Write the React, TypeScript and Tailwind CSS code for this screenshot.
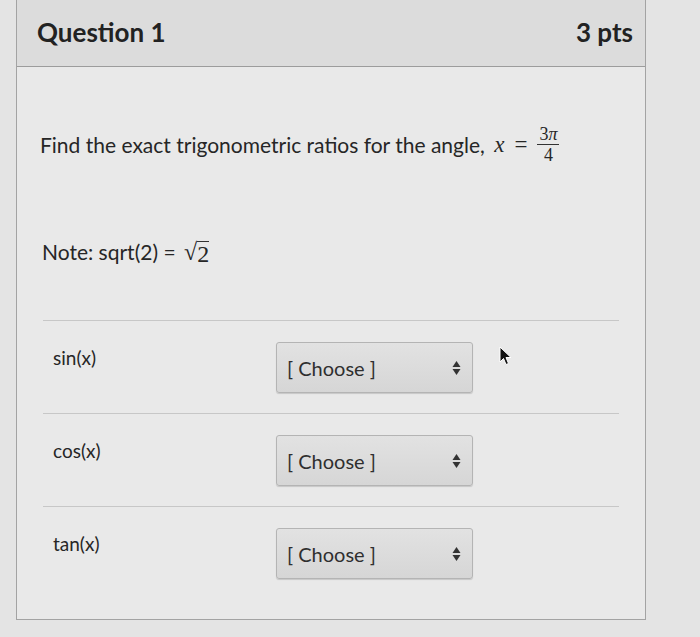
import React from 'react';

const rows = ['sin(x)', 'cos(x)', 'tan(x)'];

const SelectBox: React.FC = () => (
  <div className="flex h-[51px] w-[197px] items-center justify-between rounded-[3px] border border-[#b4b4b4] bg-gradient-to-b from-[#e2e2e2] to-[#d6d6d6] pl-[10px] pr-[11px] shadow-[0_1px_1px_rgba(0,0,0,0.15)]">
    <span className="text-[20px] text-[#2f2f2f]">[ Choose ]</span>
    <svg width="9" height="16" viewBox="0 0 9 16" className="mt-[1px]">
      <path d="M4.5 1 L8.5 7 L0.5 7 Z" fill="#333" />
      <path d="M0.5 9 L8.5 9 L4.5 15 Z" fill="#333" />
    </svg>
  </div>
);

const Cursor: React.FC = () => (
  <svg width="14" height="20" viewBox="0 0 14 20" className="absolute left-[499px] top-[346px]">
    <path d="M1 1 L1 16 L4.5 12.5 L7 18.5 L9.5 17.5 L7 11.5 L12 11.5 Z" fill="#111" stroke="#fff" strokeWidth="1" />
  </svg>
);

const App: React.FC = () => {
  return (
    <div className="relative h-[637px] w-[700px] overflow-hidden bg-[#e4e4e4] font-['Lato','Liberation_Sans',sans-serif] text-[#262626]">
      <div className="ml-[16px] mt-[-2px] flex h-[622px] w-[630px] flex-col border border-[#a3a3a3] bg-[#e9e9e9]">
        <header className="flex h-[68px] shrink-0 items-center justify-between border-b border-[#9c9c9c] bg-[#dcdcdc] pl-[20px] pr-[12px]">
          <h1 className="text-[26px] font-bold text-[#222]">Question 1</h1>
          <span className="text-[26px] font-bold text-[#222]">3 pts</span>
        </header>

        <div className="flex flex-1 flex-col pt-[58px]">
          <p className="flex items-center pl-[23px] text-[21px] leading-[28px]">
            <span>Find the exact trigonometric ratios for the angle,&nbsp;</span>
            <span className="ml-[4px] font-['Liberation_Serif',serif] text-[23px] italic">x</span>
            <span className="mx-[10px] font-['Liberation_Serif',serif] text-[23px]">=</span>
            <span className="inline-flex flex-col items-center font-['Liberation_Serif',serif] text-[18px] leading-[18px]">
              <span className="border-b border-[#333] px-[2px] pb-[1px]">3<i>π</i></span>
              <span className="pt-[1px]">4</span>
            </span>
          </p>

          <p className="mt-[74px] flex items-end pl-[25px] text-[21px] leading-[28px]">
            <span>Note: sqrt(2) =&nbsp;</span>
            <span className="ml-[3px] inline-flex items-end font-['Liberation_Serif',serif] text-[24px]">
              <span className="leading-[27px]">√</span>
              <span className="border-t border-[#333] leading-[24px]">2</span>
            </span>
          </p>

          <div className="mt-[54px] px-[26px]">
            {rows.map((label, i) => (
              <div
                key={label}
                className={`flex items-start border-t border-[#c7c7c7] pt-[21px] ${i < 2 ? 'pb-[20px]' : ''}`}
              >
                <span className="mt-[4px] w-[233px] pl-[10px] text-[19px] leading-[24px]">{label}</span>
                <SelectBox />
              </div>
            ))}
          </div>
        </div>
      </div>
      <Cursor />
    </div>
  );
};

export default App;
